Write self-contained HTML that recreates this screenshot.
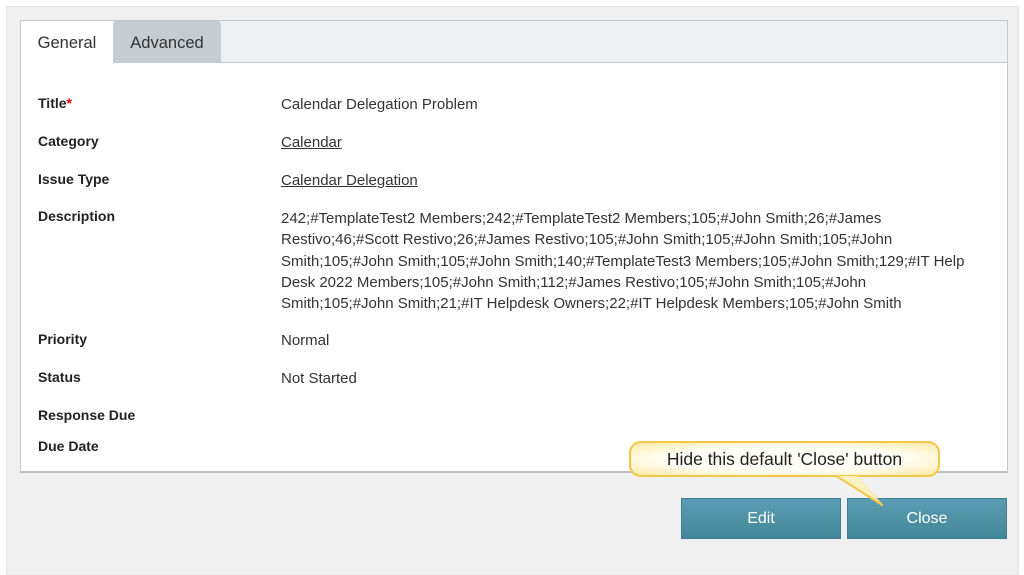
<!DOCTYPE html>
<html><head><style>
*{margin:0;padding:0;box-sizing:border-box}
body{width:1024px;height:575px;background:#fff;position:relative;overflow:hidden;font-family:"Liberation Sans",sans-serif;color:#333}
.bg{position:absolute;left:6px;top:6px;width:1013px;height:569px;background:#f0f0f0;border:1px solid #e6e6e6}
.panel{position:absolute;left:20px;top:20px;width:988px;height:453px;background:#fff;border:1px solid #c8c8c8;border-bottom:2px solid #c0c0c0}
.tabbar{position:absolute;left:0;top:0;width:986px;height:42px;background:#eef1f4;border-bottom:1px solid #c8c8c8}
.tab{position:absolute;top:0;height:42px;font-size:16.5px;line-height:44px;text-align:center;color:#333}
.t1{left:0;width:92px;background:#fff;height:43px}
.t2{left:92px;width:108px;background:#c5cdd3;border-radius:3px 3px 0 0}
.l{position:absolute;left:17px;font-size:14px;font-weight:bold;color:#222}
.v{position:absolute;left:260px;font-size:15px;color:#333;white-space:nowrap}
.u{text-decoration:underline}
.req{color:#d00}
.btn{position:absolute;top:498px;width:160px;height:41px;background:linear-gradient(#5b9db2,#43879a);border:1px solid #3d7f92;color:#fff;font-size:16px;text-align:center;line-height:40px}
.call{position:absolute;left:629px;top:441px;width:311px;height:36px;border:2px solid #f3c745;border-radius:12px;background:radial-gradient(ellipse at center,#fffef6 55%,#fbe9a3 100%);font-size:17.5px;text-align:center;line-height:33px;color:#222}
</style></head><body>
<div class="bg"></div>
<div class="panel">
 <div class="tabbar"><div class="tab t1">General</div><div class="tab t2">Advanced</div></div>
 <div class="l" style="top:74px">Title<span class="req">*</span></div>
 <div class="v" style="top:75px">Calendar Delegation Problem</div>
 <div class="l" style="top:112px">Category</div>
 <div class="v u" style="top:113px">Calendar</div>
 <div class="l" style="top:150px">Issue Type</div>
 <div class="v u" style="top:151px">Calendar Delegation</div>
 <div class="l" style="top:187px">Description</div>
 <div class="v" style="top:187px;line-height:21.3px">242;#TemplateTest2 Members;242;#TemplateTest2 Members;105;#John Smith;26;#James<br>Restivo;46;#Scott Restivo;26;#James Restivo;105;#John Smith;105;#John Smith;105;#John<br>Smith;105;#John Smith;105;#John Smith;140;#TemplateTest3 Members;105;#John Smith;129;#IT Help<br>Desk 2022 Members;105;#John Smith;112;#James Restivo;105;#John Smith;105;#John<br>Smith;105;#John Smith;21;#IT Helpdesk Owners;22;#IT Helpdesk Members;105;#John Smith</div>
 <div class="l" style="top:310px">Priority</div>
 <div class="v" style="top:311px">Normal</div>
 <div class="l" style="top:348px">Status</div>
 <div class="v" style="top:349px">Not Started</div>
 <div class="l" style="top:386px">Response Due</div>
 <div class="l" style="top:417px">Due Date</div>
</div>
<div class="btn" style="left:681px">Edit</div>
<div class="btn" style="left:847px">Close</div>
<svg style="position:absolute;left:0;top:0" width="1024" height="575"><path d="M855 475 L882 505 L835 475" fill="#fdf3cd" stroke="#f3c745" stroke-width="2" stroke-linejoin="round"/></svg>
<div class="call">Hide this default 'Close' button</div>
<svg style="position:absolute;left:0;top:0" width="1024" height="575"><path d="M857 476 L880 502 L838 476 Z" fill="#fdf0c0"/></svg>
</body></html>
